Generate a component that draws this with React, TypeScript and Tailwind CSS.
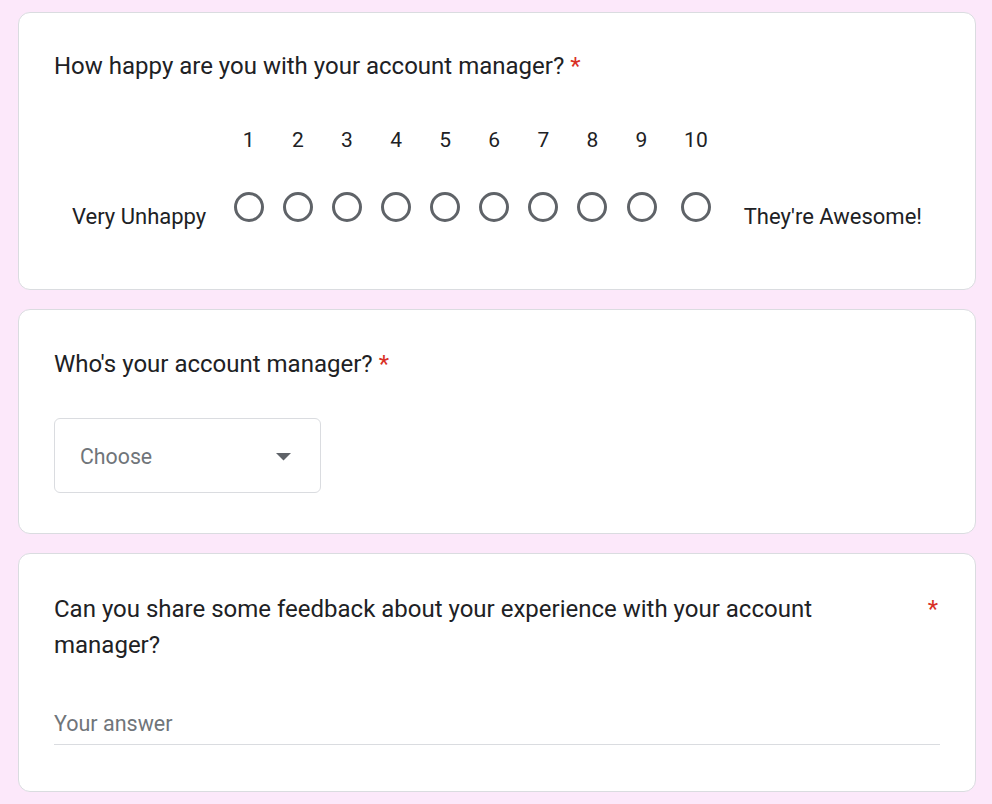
import React from "react";

const scale = ["1", "2", "3", "4", "5", "6", "7", "8", "9", "10"];

function Required() {
  return <span className="text-[#d93025] pl-[6px]">*</span>;
}

function Card({ className, children }: { className: string; children: React.ReactNode }) {
  return (
    <div className={`ml-[18px] w-[958px] bg-white border border-[#dadce0] rounded-[12px] px-[35px] pt-[35px] ${className}`}>
      {children}
    </div>
  );
}

function App() {
  return (
    <div
      className="min-h-screen bg-[#fce8fa] pt-[12px] pb-[12px] text-[#202124]"
      style={{ fontFamily: "Roboto, 'Liberation Sans', sans-serif" }}
    >
      <Card className="h-[278px]">
        <div className="text-[24px] leading-[36px]">
          How happy are you with your account manager?
          <Required />
        </div>
        <div className="mt-[44px] flex text-[21px] leading-[25px]">
          <div className="px-[18px] pt-[76px] text-[22px] whitespace-nowrap">Very Unhappy</div>
          {scale.map((n) => (
            <label
              key={n}
              className={`flex flex-col items-center ${n === "10" ? "w-[60px]" : "w-[49.4px]"}`}
            >
              <span>{n}</span>
              <span className="mt-[39px] w-[30px] h-[30px] rounded-full border-[3px] border-[#5f6368]" />
            </label>
          ))}
          <div className="px-[18px] pt-[76px] text-[22px] whitespace-nowrap">They're Awesome!</div>
        </div>
      </Card>

      <Card className="mt-[19px] h-[225px]">
        <div className="text-[24px] leading-[36px] mt-[1px]">
          Who's your account manager?
          <Required />
        </div>
        <div className="mt-[36px] w-[267px] h-[75px] border border-[#dadce0] rounded-[6px] flex items-center pl-[25px] pr-[29px]">
          <span className="flex-1 text-[21.3px] text-[#70757a] pt-[3px]">Choose</span>
          <svg width="15" height="8" viewBox="0 0 15 8" className="mt-[2px]">
            <path d="M0 0 L15 0 L7.5 7.5 Z" fill="#5f6368" />
          </svg>
        </div>
      </Card>

      <Card className="mt-[19px] h-[239px]">
        <div className="flex text-[24px] leading-[36px] mt-[2px]">
          <span className="w-[850px]">
            Can you share some feedback about your experience with your account manager?
          </span>
          <span className="ml-auto pr-[2px] text-[#d93025]">*</span>
        </div>
        <div className="mt-[48px] border-b border-[#dadce0] pb-[8px] text-[21.5px] leading-[25px] text-[#70757a]">
          Your answer
        </div>
      </Card>
    </div>
  );
}

export default App;
